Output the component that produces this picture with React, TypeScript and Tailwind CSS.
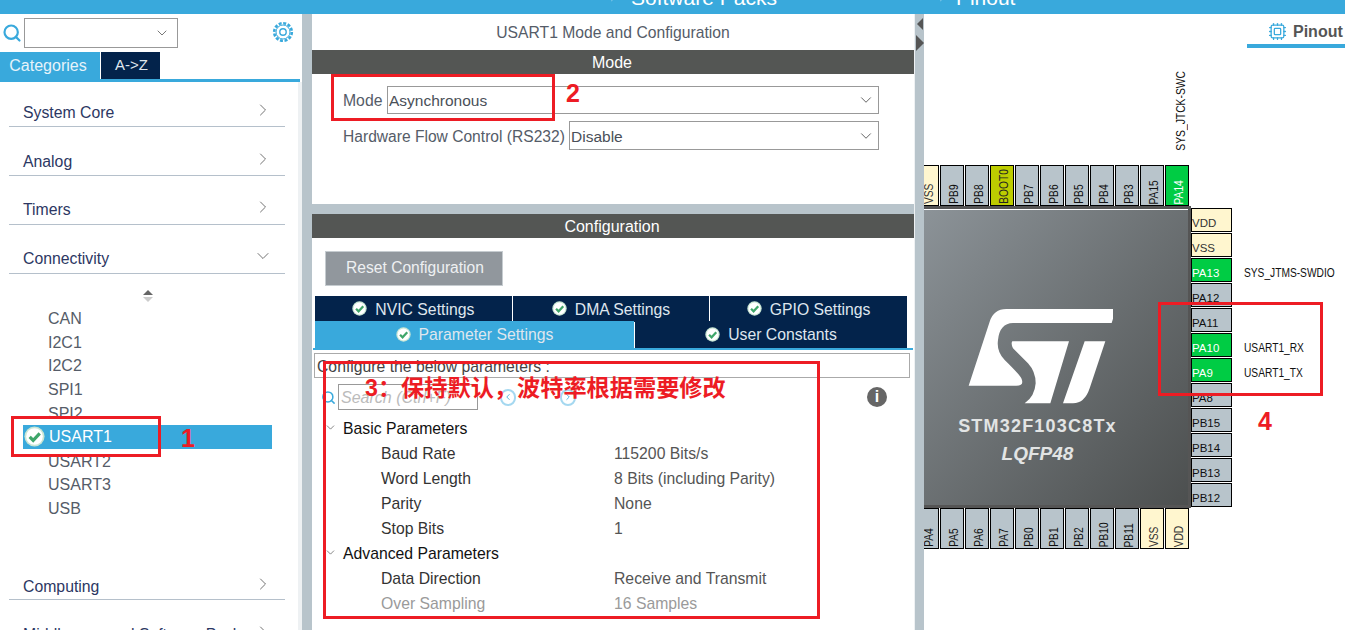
import { ChevronDown, ChevronRight, ChevronLeft, Cpu, Search } from "lucide-react";

const sans = "font-['Liberation_Sans',Arial,sans-serif]";

function CheckIcon({ size = 15 }: { size?: number }) {
  return (
    <svg width={size} height={size} viewBox="0 0 24 24" className="shrink-0">
      <circle cx="12" cy="12" r="11.5" fill="#c9e6d4" />
      <circle cx="12" cy="12" r="9.5" fill="#fff" />
      <path d="M6.5 12.5 L10.5 16.5 L18 8.5" fill="none" stroke="#3fa66a" strokeWidth="3.6" />
    </svg>
  );
}

function Gear() {
  return (
    <svg width="22" height="22" viewBox="0 0 22 22" fill="none" stroke="#39a9dc">
      <circle cx="11" cy="11" r="8.8" strokeWidth="2.6" strokeDasharray="3 1.6" />
      <circle cx="11" cy="11" r="7" strokeWidth="1" />
      <circle cx="11" cy="11" r="3.2" strokeWidth="1.4" />
    </svg>
  );
}

function StLogo() {
  return (
    <svg width="150" height="110" viewBox="0 0 450 330" fill="#fff">
      <path d="M459 27 L130 27 Q92 27 80 65 L17 257 L160 257 Q185 257 175 235 Q168 222 125 180 Q100 155 105 120 Q110 70 150 69 L446 69 Z" />
      <path d="M148 124 L318 124 L262 310 L185 310 Q215 290 218 250 Q218 215 195 190 L150 145 Q143 130 148 124 Z" />
      <path d="M365 124 L427 124 L380 265 Q365 310 330 310 L300 310 Z" />
    </svg>
  );
}

function Category({ name, open, first, pad = "pb-[4px]" }: { name: string; open?: boolean; first?: boolean; pad?: string }) {
  return (
    <div className={`ml-[9px] flex w-[276px] items-end justify-between border-b border-[#b5c0cb] pl-[14px] pr-[14px] ${pad} ${first ? "h-[45px]" : "h-[49px]"}`}>
      <span className="whitespace-nowrap text-[15.8px] leading-[19px] text-[#2c3763]">{name}</span>
      {open ? (
        <ChevronDown size={20} strokeWidth={1.1} className="mb-[2px] -mr-[2px] text-[#666]" />
      ) : (
        <ChevronRight size={20} strokeWidth={1.1} className="mb-[2px] -mr-[2px] text-[#666]" />
      )}
    </div>
  );
}

function SubItem({ name }: { name: string }) {
  return <div className="flex h-[23.75px] items-center pl-[48px] pt-[2px] text-[16px] text-[#555c68]">{name}</div>;
}

function Sidebar() {
  return (
    <div className="flex h-full w-[312px] shrink-0">
      <div className="w-[302px] shrink-0 bg-white">
        <div className="flex h-[38px] items-center pl-[2px]">
          <Search size={20} strokeWidth={2.6} className="text-[#39a9dc]" />
          <div className="ml-[2px] flex h-[30px] w-[154px] items-center justify-end border border-[#999] pr-[7px]">
            <ChevronDown size={16} strokeWidth={1.2} className="text-[#555]" />
          </div>
          <div className="ml-[94px] -mt-[2px]">
            <Gear />
          </div>
        </div>
        <div className="flex h-[30px] w-[300px] border-b-[3px] border-[#39a9dc]">
          <div className="flex h-[27px] w-[100px] items-center justify-center bg-[#39a9dc] pr-[4px] text-[16px] text-[#e6f3fa]">Categories</div>
          <div className="ml-px flex h-[27px] w-[59px] items-center justify-center bg-[#03234b] pl-[2px] text-[15px] text-[#dfe6ee]">A-&gt;Z</div>
        </div>
        <div className="h-[548px] border-r-[4px] border-[#eef1f3]">
          <Category name="System Core" first />
          <Category name="Analog" />
          <Category name="Timers" pad="pb-[5px]" />
          <Category name="Connectivity" open pad="pb-[5px]" />
          <div className="h-[281px]">
            <div className="flex h-[32px] flex-col items-center justify-center pl-[2px] pr-[4px] pt-[12px]">
              <span className="h-0 w-0 border-x-[5px] border-b-[5px] border-x-transparent border-b-[#666]" />
              <span className="mt-[2px] h-0 w-0 border-x-[5px] border-t-[5px] border-x-transparent border-t-[#ccc]" />
            </div>
            {["CAN", "I2C1", "I2C2", "SPI1", "SPI2"].map((s) => (
              <SubItem key={s} name={s} />
            ))}
            <div className="ml-[23px] flex h-[24px] w-[249px] items-center bg-[#39a9dc] pl-px text-[16px] text-white">
              <CheckIcon size={21} />
              <span className="ml-[4px] pt-px">USART1</span>
            </div>
            {["USART2", "USART3", "USB"].map((s) => (
              <SubItem key={s} name={s} />
            ))}
          </div>
          <Category name="Computing" first pad="pb-[3px]" />
          <Category name="Middleware and Software Packs" />
        </div>
      </div>
      <div className="w-[10px] bg-[#b8c4cb]" />
    </div>
  );
}

function ModeSelect({ value, width }: { value: string; width: string }) {
  return (
    <div className={`flex h-full items-center justify-between border border-[#999] pl-px pr-[3px] text-[15.5px] text-[#4a4f58] ${width}`}>
      <span className="pt-[2px]">{value}</span>
      <ChevronDown size={18} strokeWidth={1.2} className="text-[#555]" />
    </div>
  );
}

function SettingTab({ label, active, textPad = "pt-[2px]" }: { label: string; active?: boolean; textPad?: string }) {
  return (
    <div className={`flex items-center justify-center gap-[8px] text-[15.75px] text-[#dfe6ee] ${active ? "bg-[#39a9dc]" : "bg-[#03234b]"}`}>
      <CheckIcon />
      <span className={textPad}>{label}</span>
    </div>
  );
}

const basic = [
  ["Baud Rate", "115200 Bits/s"],
  ["Word Length", "8 Bits (including Parity)"],
  ["Parity", "None"],
  ["Stop Bits", "1"],
];

function Row({ name, value, muted }: { name: string; value: string; muted?: boolean }) {
  return (
    <div className={`flex h-[25px] items-center pl-[69px] pt-[2px] text-[15.75px] ${muted ? "text-[#9a9a9a]" : "text-[#333]"}`}>
      <span className="w-[233px]">{name}</span>
      <span className={muted ? "" : "text-[#555]"}>{value}</span>
    </div>
  );
}

function Group({ name }: { name: string }) {
  return (
    <div className="flex h-[25px] items-center pl-[12px] text-[15.75px] text-[#111]">
      <ChevronDown size={13} strokeWidth={1.3} className="text-[#555]" />
      <span className="ml-[6px] pt-[2px]">{name}</span>
    </div>
  );
}

function Middle() {
  return (
    <div className="flex h-full w-[602px] shrink-0 flex-col bg-[#b8c4cb]">
      <div className="h-[190px] bg-white">
        <div className="flex h-[36px] items-center justify-center pt-[2px] text-[15.7px] text-[#555c68]">USART1 Mode and Configuration</div>
        <div className="flex h-[24px] items-center justify-center bg-[#545654] pr-[2px] pt-[2px] text-[16px] text-white">Mode</div>
        <div className="mt-[12px] flex h-[28px] items-center pl-[31px]">
          <span className="w-[44px] pt-[2px] text-[15.75px] text-[#555c68]">Mode</span>
          <ModeSelect value="Asynchronous" width="w-[492px]" />
        </div>
        <div className="mt-[7px] flex h-[29px] items-center pl-[31px]">
          <span className="w-[226px] whitespace-nowrap pt-[2px] text-[15.6px] text-[#555c68]">Hardware Flow Control (RS232)</span>
          <ModeSelect value="Disable" width="w-[310px]" />
        </div>
      </div>
      <div className="mt-[10px] flex-1 bg-white">
        <div className="flex h-[24px] items-center justify-center bg-[#545654] pr-[2px] pt-[2px] text-[16px] text-white">Configuration</div>
        <div className="ml-[13px] mt-[13px] flex h-[35px] w-[178px] items-center justify-center border border-[#c6ccd0] bg-[#91979d] pb-[1px] pl-[2px] text-[15.6px] text-[#eef0f2]">
          Reset Configuration
        </div>
        <div className="ml-[3px] mt-[10px] grid h-[24px] w-[592px] grid-cols-3 gap-px">
          <SettingTab label="NVIC Settings" />
          <SettingTab label="DMA Settings" />
          <SettingTab label="GPIO Settings" />
        </div>
        <div className="ml-[3px] mt-px grid h-[27px] w-[592px] grid-cols-[319px_1fr] gap-px">
          <SettingTab label="Parameter Settings" active textPad="pt-0" />
          <SettingTab label="User Constants" textPad="pt-0" />
        </div>
        <div className="ml-px h-[2px] w-[600px] bg-[#39a9dc]" />
        <div className="ml-[2px] mt-[3px] flex h-[25px] w-[596px] items-center border border-[#aaa] pl-[2px] pt-[3px] text-[15.75px] text-[#444]">
          Configure the below parameters :
        </div>
        <div className="mt-[6px] flex h-[26px] items-center pl-[9px]">
          <Search size={15} strokeWidth={2.4} className="text-[#39a9dc]" />
          <div className="ml-[2px] flex h-full w-[140px] items-center border border-[#999] pl-[2px] pt-[2px] text-[16px] italic text-[#bbb]">Search (Ctrl+F)</div>
          <div className="ml-[22px] flex h-[17px] w-[16px] items-center justify-center rounded-full border-2 border-[#a5d8f0] text-[#39a9dc]">
            <ChevronLeft size={10} strokeWidth={2} />
          </div>
          <div className="ml-[44px] flex h-[17px] w-[16px] items-center justify-center rounded-full border-2 border-[#a5d8f0] text-[#39a9dc]">
            <ChevronRight size={10} strokeWidth={2} />
          </div>
          <div className="ml-[291px] flex h-[20px] w-[20px] items-center justify-center rounded-full bg-[#666] text-[16px] font-bold text-white">i</div>
        </div>
        <div className="mt-[5px]">
          <Group name="Basic Parameters" />
          {basic.map(([n, v]) => (
            <Row key={n} name={n} value={v} />
          ))}
          <Group name="Advanced Parameters" />
          <Row name="Data Direction" value="Receive and Transmit" />
          <Row name="Over Sampling" value="16 Samples" muted />
        </div>
      </div>
    </div>
  );
}

function TopPin({ label, kind = "io", signal }: { label: string; kind?: string; signal?: string }) {
  const tone =
    kind === "power" ? "bg-[#fff6cf] text-[#333]" : kind === "boot" ? "bg-[#bdcc00] text-[#222]" : kind === "on" ? "bg-[#00cc44] text-white" : "bg-[#b8c4cb] text-[#111]";
  return (
    <div className={`relative flex h-[41px] w-[24px] shrink-0 items-end justify-center border border-black pb-[1px] pl-[4px] ${tone}`}>
      <span className="block origin-bottom scale-y-[0.85]">
        <span className="block rotate-180 whitespace-nowrap text-[12px] leading-none [writing-mode:vertical-rl]">{label}</span>
      </span>
      {signal && (
        <span className="absolute bottom-[54px] left-[9px] block origin-bottom scale-y-[0.86]">
          <span className="block rotate-180 whitespace-nowrap text-[12px] leading-none text-[#111] [writing-mode:vertical-rl]">{signal}</span>
        </span>
      )}
    </div>
  );
}

function SidePin({ label, kind = "io", signal }: { label: string; kind?: string; signal?: string }) {
  const tone = kind === "power" ? "bg-[#fff6cf] text-[#333]" : kind === "on" ? "bg-[#00cc44] text-white" : "bg-[#b8c4cb] text-[#111]";
  return (
    <div className="flex h-[24px] items-center">
      <div className={`flex h-full w-[41px] shrink-0 items-end border border-black pb-[2px] text-[11.5px] leading-none ${tone}`}>{label}</div>
      {signal && <span className="ml-[12px] origin-left scale-x-[0.85] whitespace-nowrap pt-[6px] text-[12px] text-[#111]">{signal}</span>}
    </div>
  );
}

const topPins: [string, string?, string?][] = [
  ["VSS", "power"], ["PB9"], ["PB8"], ["BOOT0", "boot"], ["PB7"], ["PB6"], ["PB5"], ["PB4"], ["PB3"], ["PA15"], ["PA14", "on", "SYS_JTCK-SWC"],
];
const sidePins: [string, string?, string?][] = [
  ["VDD", "power"], ["VSS", "power"], ["PA13", "on", "SYS_JTMS-SWDIO"], ["PA12"], ["PA11"], ["PA10", "on", "USART1_RX"], ["PA9", "on", "USART1_TX"], ["PA8"], ["PB15"], ["PB14"], ["PB13"], ["PB12"],
];
const bottomPins: [string, string?][] = [
  ["PA4"], ["PA5"], ["PA6"], ["PA7"], ["PB0"], ["PB1"], ["PB2"], ["PB10"], ["PB11"], ["VSS", "power"], ["VDD", "power"],
];

function Pinout() {
  return (
    <div className="relative h-full min-w-0 flex-1 overflow-hidden bg-white">
      <div className="ml-auto flex h-[34px] w-[98px] items-center border-b-[4px] border-[#39a9dc] pl-[21px] pt-[4px]">
        <Cpu size={19} strokeWidth={1.6} className="text-[#39a9dc]" />
        <span className="ml-[6px] pt-px text-[16px] font-bold text-[#555]">Pinout</span>
      </div>
      <div className="mt-[117px] flex gap-px -ml-[9px]">
        {topPins.map(([l, k, s]) => (
          <TopPin key={l} label={l} kind={k} signal={s} />
        ))}
      </div>
      <div className="flex h-[302px]">
        <div className="flex w-[267px] shrink-0 flex-col items-center border-y-[3px] border-r-[3px] border-[#555] bg-gradient-to-br from-[#8c9398] to-[#4c4f4f] pr-[37px] pt-[91px] text-[#e2e4e4] shadow-[inset_0_1px_0_#fff]">
          <StLogo />
          <span className="mt-[5px] whitespace-nowrap text-[18px] font-bold leading-[22px] tracking-[1.2px]">STM32F103C8Tx</span>
          <span className="mt-[6px] text-[19px] font-bold italic leading-[22px]">LQFP48</span>
        </div>
        <div className="flex flex-col gap-px pt-[2px]">
          {sidePins.map(([l, k, s]) => (
            <SidePin key={l} label={l} kind={k} signal={s} />
          ))}
        </div>
      </div>
      <div className="flex gap-px -ml-[9px]">
        {bottomPins.map(([l, k]) => (
          <TopPin key={l} label={l} kind={k} />
        ))}
      </div>
    </div>
  );
}

export default function App() {
  return (
    <div className={`relative flex h-[630px] w-[1345px] flex-col overflow-hidden bg-white ${sans}`}>
      <div className="flex h-[14px] shrink-0 items-start overflow-hidden bg-[#39a9dc] text-[21px] leading-[20px] text-white">
        <span className="ml-[608px] flex -translate-y-[12px] items-end">
          <ChevronRight size={10} className="mb-[5px] text-[#cfe9f6]" />
          <span className="ml-[13px] whitespace-nowrap">Software Packs</span>
        </span>
        <span className="ml-[160px] flex -translate-y-[12px] items-end">
          <ChevronRight size={10} className="mb-[5px] text-[#cfe9f6]" />
          <span className="ml-[9px] whitespace-nowrap">Pinout</span>
        </span>
      </div>
      <div className="flex min-h-0 flex-1">
        <Sidebar />
        <Middle />
        <div className="w-px bg-[#eef1f3]" />
        <div className="flex w-[9px] shrink-0 flex-col items-center gap-[5px] bg-[#b8c4cb] pt-[4px]">
          <span className="h-0 w-0 border-y-[6px] border-r-[6px] border-y-transparent border-r-[#555]" />
          <span className="h-0 w-0 border-y-[8px] border-l-[8px] border-y-transparent border-l-[#555]" />
        </div>
        <Pinout />
      </div>

      {/* annotations drawn over the screenshot */}
      <div className="absolute left-[11px] top-[416px] h-[41px] w-[150px] border-[3px] border-[#ed1c24]" />
      <div className="absolute left-[331px] top-[74px] h-[47px] w-[224px] border-[3px] border-[#ed1c24]" />
      <div className="absolute left-[323px] top-[361px] h-[258px] w-[497px] border-[3px] border-[#ed1c24]" />
      <div className="absolute left-[1158px] top-[302px] h-[94px] w-[165px] border-[3px] border-[#ed1c24]" />
      <span className="absolute left-[181px] top-[424px] text-[25px] font-bold leading-[28px] text-[#ed1c24]">1</span>
      <span className="absolute left-[566px] top-[79px] text-[25px] font-bold leading-[28px] text-[#ed1c24]">2</span>
      <span className="absolute left-[1258px] top-[407px] text-[25px] font-bold leading-[28px] text-[#ed1c24]">4</span>
      <span className="absolute left-[365px] top-[374px] whitespace-nowrap font-['Liberation_Sans','Noto_Sans_CJK_SC',sans-serif] text-[23.2px] font-bold leading-[28px] text-[#ed1c24]">3：保持默认，波特率根据需要修改</span>
    </div>
  );
}
